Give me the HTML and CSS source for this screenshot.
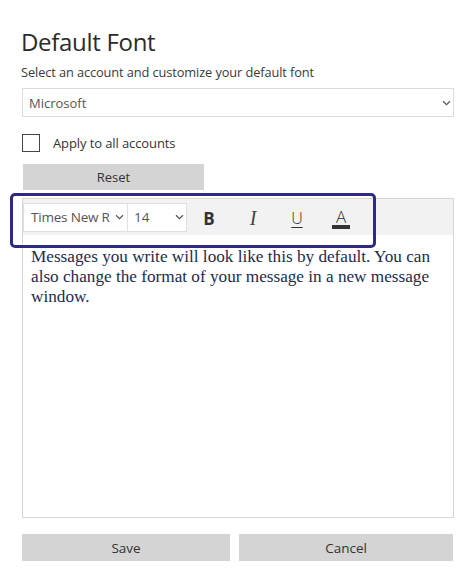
FILE: index.html
```html
<!DOCTYPE html>
<html>
<head>
<meta charset="utf-8">
<link rel="stylesheet" href="styles.css">
</head>
<body>
<div class="page">
  <h1 class="title">Default Font</h1>
  <p class="subtitle">Select an account and customize your default font</p>
  <div class="select account">
    <span>Microsoft</span>
    <svg class="chev" width="9" height="6" viewBox="0 0 9 6"><path d="M1 1.2 L4.5 4.6 L8 1.2" fill="none" stroke="#555" stroke-width="1.2"/></svg>
  </div>
  <label class="check-row">
    <span class="box"></span>
    <span class="check-label">Apply to all accounts</span>
  </label>
  <div class="reset">Reset</div>
  <div class="editor">
    <div class="toolbar">
      <div class="tsel font-sel"><span>Times New R</span><svg class="chev" width="9" height="6" viewBox="0 0 9 6"><path d="M1 1.2 L4.5 4.6 L8 1.2" fill="none" stroke="#555" stroke-width="1.2"/></svg></div>
      <div class="tsel size-sel"><span>14</span><svg class="chev" width="9" height="6" viewBox="0 0 9 6"><path d="M1 1.2 L4.5 4.6 L8 1.2" fill="none" stroke="#555" stroke-width="1.2"/></svg></div>
      <div class="tbtn bold">B</div>
      <div class="tbtn italic">I</div>
      <div class="tbtn under">U</div>
      <div class="tbtn color"><span class="a">A</span><span class="bar"></span></div>
    </div>
    <div class="msg">Messages you write will look like this by default. You can also change the format of your message in a new message window.</div>
    <div class="highlight"></div>
  </div>
  <div class="actions">
    <div class="btn">Save</div>
    <div class="btn">Cancel</div>
  </div>
</div>
</body>
</html>
```
FILE: styles.css
```css
html, body { margin: 0; padding: 0; background: #fff; }
body { font-family: "Open Sans", "Noto Sans", sans-serif; color: #333; }
.page { width: 432px; padding: 27px 0 0 22px; }
.title { margin: 0 0 0 -1px; font-size: 24px; font-weight: 400; line-height: 30px; color: #2b2b2b; letter-spacing: -0.3px; }
.subtitle { margin: 6px 0 0 -1px; font-size: 12.8px; line-height: 18px; color: #3a3a3a; letter-spacing: -0.1px; }
.select { box-sizing: border-box; height: 29px; border: 1px solid #dcdcdc; display: flex; align-items: center; justify-content: space-between; background: #fff; }
.account { margin-top: 7px; padding: 0 2px 0 6px; font-size: 13px; color: #555; }
.chev { display: block; }
.check-row { display: flex; align-items: center; margin-top: 17px; height: 18px; }
.box { box-sizing: border-box; width: 18px; height: 18px; border: 1.5px solid #444; margin-left: 0; }
.check-label { margin-left: 13px; font-size: 13px; color: #333; letter-spacing: -0.1px; }
.reset { box-sizing: border-box; width: 181px; height: 26px; margin: 12px 0 0 1px; background: #d4d4d4; display: flex; align-items: center; justify-content: center; font-size: 13px; color: #333; }
.editor { position: relative; box-sizing: border-box; height: 320px; margin-top: 8px; border: 1px solid #d6d6d6; }
.toolbar { height: 36px; background: #f2f2f2; display: flex; align-items: center; }
.tsel { box-sizing: border-box; height: 29px; background: #fff; border: 1px solid #e0e0e0; display: flex; align-items: center; justify-content: space-between; font-size: 13.5px; color: #555; }
.font-sel { width: 105px; padding: 0 3px 0 7px; letter-spacing: -0.2px; }
.size-sel { width: 60px; margin-left: -1px; padding: 0 2px 0 6px; }
.tbtn { width: 44px; height: 29px; display: flex; align-items: center; justify-content: center; color: #333; position: relative; }
.bold { font-family: "Open Sans", sans-serif; font-weight: 700; font-size: 17px; padding-top: 2px; }
.italic { font-family: "Liberation Serif", serif; font-style: italic; font-size: 20px; color: #444; padding-top: 2px; }
.under { font-size: 16px; text-decoration: underline; text-underline-offset: 3px; text-decoration-thickness: 1px; font-weight: 300; padding-top: 2px; }
.color { flex-direction: column; padding-top: 3px; }
.color .a { font-size: 17px; line-height: 15px; font-weight: 300; }
.color .bar { display: block; width: 18px; height: 4px; background: #333; margin-top: 1px; }
.msg { padding: 12px 18px 0 8px; font-family: "Liberation Serif", "Times New Roman", serif; font-size: 17.2px; line-height: 20px; color: #1d2b4f; }
.highlight { position: absolute; left: -13px; top: -6px; width: 366px; height: 55px; box-sizing: border-box; border: 3px solid #2d2a80; border-radius: 5px; }
.actions { display: grid; grid-template-columns: 208px 1fr; gap: 9px; margin-top: 16px; width: 431px; }
.btn { height: 27px; background: #d4d4d4; display: flex; align-items: center; justify-content: center; font-size: 13.5px; color: #333; }
```
